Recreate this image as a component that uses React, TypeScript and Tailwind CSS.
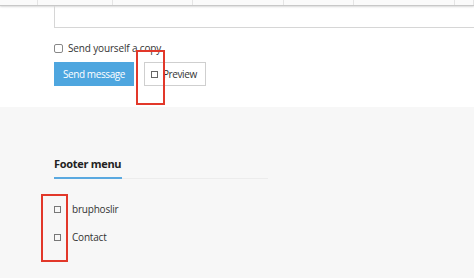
import React from "react";

export default function App() {
  const cells = [38, 75, 80, 91, 70, 101, 19];
  return (
    <div
      className="relative w-[474px] h-[278px] overflow-hidden bg-white text-[#333]"
      style={{ fontFamily: '"Open Sans", "Liberation Sans", sans-serif' }}
    >
      {/* top strip */}
      <div className="flex h-[6px] bg-[#fafafa] border-b border-[#c8c8c8] shadow-[0_1px_2px_rgba(0,0,0,0.15)]">
        {cells.map((w, i) => (
          <div key={i} className="h-full border-r border-[#e4e4e4]" style={{ width: w }} />
        ))}
      </div>
      <div className="pl-[54px]">
        <div className="h-[22px] w-[460px] border-l border-b border-[#d6d6d6]" />
        <label className="mt-[14px] flex items-center gap-[5px] text-[10px] tracking-[-0.15px] leading-[12px] text-[#333]">
          <span className="w-[9px] h-[9px] border border-[#888] rounded-[2px] bg-white" />
          Send yourself a copy
        </label>
        <div className="mt-[8px] flex gap-[10px]">
          <div className="w-[80px] h-[24px] bg-[#4ea6df] text-white text-[10px] tracking-[-0.4px] flex items-center justify-center">
            Send message
          </div>
          <div className="w-[62px] h-[24px] border border-[#cfcfcf] bg-white text-[10px] tracking-[-0.4px] flex items-center pl-[6px] gap-[5px]">
            <span className="w-[7px] h-[7px] border border-[#666]" />
            Preview
          </div>
        </div>
      </div>
      <div className="absolute left-0 right-0 top-[107px] bottom-0 bg-[#f7f7f7] pl-[54px] pt-[50px]">
        <div className="w-[214px]">
          <div className="text-[11px] tracking-[-0.3px] font-bold leading-[14px] pb-[6px] text-[#222]">Footer menu</div>
          <div className="flex h-[2px]">
            <div className="w-[68px] bg-[#5aa9e0]" />
            <div className="flex-1 bg-[#ececec] h-[1px] mt-[1px]" />
          </div>
        </div>
        <div className="mt-[23px] flex flex-col gap-[14px] text-[10px] tracking-[-0.2px] leading-[14px] text-[#333]">
          <div className="flex items-center gap-[11px]">
            <span className="w-[7px] h-[7px] border border-[#777]" />
            bruphoslir
          </div>
          <div className="flex items-center gap-[11px]">
            <span className="w-[7px] h-[7px] border border-[#777]" />
            Contact
          </div>
        </div>
      </div>
      {/* red highlight boxes */}
      <div className="absolute left-[136px] top-[50px] w-[29px] h-[55px] border-2 border-[#e2382a]" />
      <div className="absolute left-[41px] top-[194px] w-[27px] h-[68px] border-2 border-[#e2382a]" />
    </div>
  );
}
